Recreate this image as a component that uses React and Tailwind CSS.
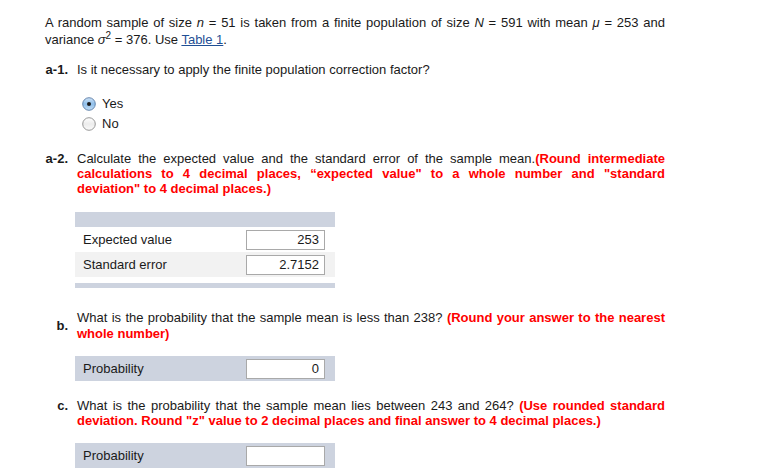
import React from "react";

function Radio({ checked }) {
  return (
    <svg width="14" height="14" viewBox="0 0 14 14" className="shrink-0">
      <defs>
        <linearGradient id="rb" x1="0" y1="0" x2="0" y2="1">
          <stop offset="0" stopColor="#cfe3f7" />
          <stop offset="0.5" stopColor="#8fbfea" />
          <stop offset="1" stopColor="#c4def6" />
        </linearGradient>
        <linearGradient id="rw" x1="0" y1="0" x2="0" y2="1">
          <stop offset="0" stopColor="#ffffff" />
          <stop offset="0.5" stopColor="#ececec" />
          <stop offset="1" stopColor="#fbfbfb" />
        </linearGradient>
      </defs>
      {checked ? (
        <>
          <circle cx="7" cy="7" r="6.3" fill="url(#rb)" stroke="#5a7ca6" strokeWidth="0.9" />
          <circle cx="7" cy="7" r="2" fill="#1a1a1a" />
        </>
      ) : (
        <circle cx="7" cy="7" r="6.3" fill="url(#rw)" stroke="#8c8c8c" strokeWidth="0.9" />
      )}
    </svg>
  );
}

function Input({ value }) {
  return (
    <div className="w-[79px] h-[20px] bg-white border border-[#a9a9a9] flex items-center justify-end pr-[5px] text-[13px] text-[#1a1a1a]">
      {value}
    </div>
  );
}

function Label({ children }) {
  return (
    <div className="w-[23px] mr-[9px] text-right font-bold text-[#1a1a1a] shrink-0">{children}</div>
  );
}

export default function App() {
  return (
    <div
      className="w-[765px] h-[468px] overflow-hidden bg-white text-[13px] text-[#1a1a1a]"
      style={{ fontFamily: '"Liberation Sans", Arial, Helvetica, sans-serif' }}
    >
      <div className="ml-[45px] w-[620px] pt-[14px]">
        <p className="leading-[17px] text-justify">
          A random sample of size <i>n</i> = 51 is taken from a finite population of size <i>N</i> = 591 with mean <i>μ</i> = 253 and
          variance <i>σ</i>
          <sup className="text-[10px] leading-none">2</sup> = 376. Use{" "}
          <span className="text-[#1f4f95] underline">Table 1</span>.
        </p>

        <div className="flex mt-[14px] leading-[15px]">
          <Label>a-1.</Label>
          <div>Is it necessary to apply the finite population correction factor?</div>
        </div>

        <div className="mt-[17px] ml-[37px] flex flex-col">
          <div className="flex items-center h-[20px] gap-[6px]">
            <Radio checked />
            <span>Yes</span>
          </div>
          <div className="flex items-center h-[20px] gap-[6px]">
            <Radio />
            <span>No</span>
          </div>
        </div>

        <div className="flex mt-[17px] leading-[15px]">
          <Label>a-2.</Label>
          <div className="w-[588px]">
            <div className="text-justify [text-align-last:justify]">
              Calculate the expected value and the standard error of the sample mean.
              <span className="text-[#ff0000] font-bold">(Round intermediate</span>
            </div>
            <div className="text-justify [text-align-last:justify] text-[#ff0000] font-bold">
              calculations to 4 decimal places, “expected value" to a whole number and "standard
            </div>
            <div className="text-[#ff0000] font-bold">deviation" to 4 decimal places.)</div>
          </div>
        </div>

        <div className="ml-[30px] w-[260px] mt-[16px]">
          <div className="h-[15px] bg-[#cdd3df]" />
          <div className="h-[25px] bg-white flex items-center justify-between pl-[8px] pr-[10px]">
            <span>Expected value</span>
            <Input value="253" />
          </div>
          <div className="h-[25px] bg-[#f2f2f2] flex items-center justify-between pl-[8px] pr-[10px]">
            <span>Standard error</span>
            <Input value="2.7152" />
          </div>
          <div className="h-[5px] bg-[#cdd3df] mt-[6px]" />
        </div>

        <div className="flex items-center mt-[22px] leading-[16px]">
          <Label>b.</Label>
          <div className="w-[588px] text-justify">
            What is the probability that the sample mean is less than 238?{" "}
            <span className="text-[#ff0000] font-bold">(Round your answer to the nearest whole number)</span>
          </div>
        </div>

        <div className="ml-[30px] w-[260px] mt-[14px] h-[25px] bg-[#cdd3df] flex items-center justify-between pl-[8px] pr-[10px]">
          <span>Probability</span>
          <Input value="0" />
        </div>

        <div className="flex mt-[17px] leading-[15px]">
          <Label>c.</Label>
          <div className="w-[588px] text-justify">
            What is the probability that the sample mean lies between 243 and 264?{" "}
            <span className="text-[#ff0000] font-bold">
              (Use rounded standard deviation. Round "z" value to 2 decimal places and final answer to 4 decimal places.)
            </span>
          </div>
        </div>

        <div className="ml-[30px] w-[260px] mt-[15px] h-[25px] bg-[#cdd3df] flex items-center justify-between pl-[8px] pr-[10px]">
          <span>Probability</span>
          <Input value="" />
        </div>
      </div>
    </div>
  );
}
